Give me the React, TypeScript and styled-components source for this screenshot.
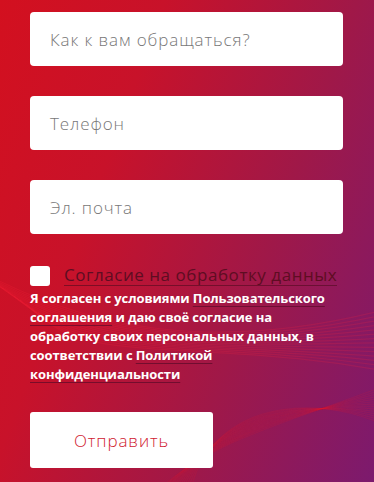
import React from "react";
import styled, { createGlobalStyle } from "styled-components";

const Global = createGlobalStyle`
  html, body { margin: 0; padding: 0; }
  body { width: 374px; height: 482px; overflow: hidden; }
`;

const Page = styled.div`
  position: relative;
  width: 374px;
  height: 482px;
  overflow: hidden;
  background: linear-gradient(110deg, #d3101f 0%, #c8122a 30%, #a01848 65%, #7c1a6e 100%);
  font-family: "Open Sans", "Noto Sans", sans-serif;
`;

const Waves = styled.svg`
  position: absolute;
  inset: 0;
  pointer-events: none;
`;

const Form = styled.form`
  position: relative;
  display: flex;
  flex-direction: column;
  padding: 12px 31px 0 30px;
`;

const Field = styled.div`
  height: 54px;
  background: #fff;
  border-radius: 4px;
  display: flex;
  align-items: center;
  padding-left: 20px;
  margin-bottom: 30px;
  font-size: 17px;
  font-weight: 300;
  color: #777;
  letter-spacing: 0.9px;
`;

const ConsentRow = styled.div`
  display: flex;
  align-items: center;
  gap: 14px;
  margin-top: 1px;
`;

const Box = styled.span`
  width: 20px;
  height: 20px;
  background: #fff;
  border-radius: 3px;
  flex-shrink: 0;
`;

const ConsentLabel = styled.span`
  font-size: 17px;
  color: #5e0d22;
  border-bottom: 1px solid rgba(80, 10, 30, 0.6);
  line-height: 20px;
  letter-spacing: 0.55px;
`;

const Terms = styled.p`
  margin: 3px 0 0 0;
  font-size: 13px;
  font-weight: 700;
  color: #fff;
  line-height: 19px;
  width: 310px;
  letter-spacing: -0.1px;
`;

const Link = styled.span`
  text-decoration: underline;
  text-decoration-color: rgba(90, 10, 40, 0.7);
  text-decoration-thickness: 1px;
  text-underline-offset: 3px;
`;

const Submit = styled.div`
  margin-top: 28px;
  width: 183px;
  height: 56px;
  background: #fff;
  border-radius: 3px;
  display: flex;
  align-items: center;
  justify-content: center;
  font-size: 17px;
  font-weight: 300;
  color: #d02030;
  letter-spacing: 0.9px;
`;

export default function App() {
  const lines = Array.from({ length: 14 }, (_, i) => i);
  return (
    <Page>
      <Global />
      <Waves width="374" height="482" viewBox="0 0 374 482">
        {lines.map((i) => (
          <path
            key={i}
            d={`M ${-40 + i * 6} ${260 + i * 4} C 80 ${330 + i * 3}, 220 ${360 - i * 2}, 420 ${300 + i * 6}`}
            stroke="rgba(255,40,60,0.18)"
            strokeWidth="1.2"
            fill="none"
          />
        ))}
        {lines.map((i) => (
          <path
            key={"b" + i}
            d={`M ${150 + i * 3} 500 C 200 ${440 - i * 2}, 300 ${420 - i * 3}, 400 ${380 + i * 4}`}
            stroke="rgba(230,30,50,0.15)"
            strokeWidth="1.2"
            fill="none"
          />
        ))}
      </Waves>
      <Form>
        <Field>Как к вам обращаться?</Field>
        <Field>Телефон</Field>
        <Field>Эл. почта</Field>
        <ConsentRow>
          <Box />
          <ConsentLabel>Согласие на обработку данных</ConsentLabel>
        </ConsentRow>
        <Terms>
          Я согласен с условиями <Link>Пользовательского соглашения</Link> и даю своё
          согласие на обработку своих персональных данных, в соответствии с{" "}
          <Link>Политикой конфиденциальности</Link>
        </Terms>
        <Submit>Отправить</Submit>
      </Form>
    </Page>
  );
}
